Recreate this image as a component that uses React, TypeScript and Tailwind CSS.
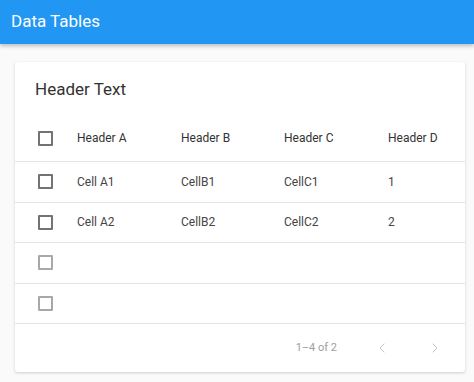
import { ChevronLeft, ChevronRight } from 'lucide-react'

const rows = [
  { a: 'Cell A1', b: 'CellB1', c: 'CellC1', d: '1' },
  { a: 'Cell A2', b: 'CellB2', c: 'CellC2', d: '2' },
  null,
  null,
]

function Checkbox({ muted }: { muted?: boolean }) {
  return (
    <span
      className={`block h-[15px] w-[15px] shrink-0 rounded-[1px] border-2 ${
        muted ? 'border-[#a8a8a8]' : 'border-[#737373]'
      }`}
    />
  )
}

export default function App() {
  return (
    <div className="min-h-[382px] bg-[#fafafa] font-['Roboto',sans-serif]">
      <header className="flex h-[44px] items-center bg-[#2196f3] px-[11px] shadow-[0_2px_4px_rgba(0,0,0,0.25)]">
        <h1 className="text-[17px] text-white">Data Tables</h1>
      </header>

      <div className="pl-[15px] pt-[18px]">
        <section className="w-[450px] rounded-[3px] bg-white shadow-[0_1px_3px_rgba(0,0,0,0.18)]">
          <div className="flex h-[53px] items-center px-[20px] pt-[2px]">
            <h2 className="text-[17px] text-[#333]">Header Text</h2>
          </div>

          <div className="flex h-[47px] items-center border-b border-[#e4e4e4] pl-[23px] text-[12px] text-[#333]">
            <Checkbox />
            <div className="ml-[24px] flex flex-1">
              <span className="w-[104px]">Header A</span>
              <span className="w-[103px]">Header B</span>
              <span className="w-[104px]">Header C</span>
              <span>Header D</span>
            </div>
          </div>

          {rows.map((r, i) => (
            <div
              key={i}
              className="flex h-[40.5px] items-center border-b border-[#e4e4e4] pl-[23px] text-[12px] text-[#444]"
            >
              <Checkbox muted={!r} />
              {r && (
                <div className="ml-[24px] flex flex-1">
                  <span className="w-[104px]">{r.a}</span>
                  <span className="w-[103px]">{r.b}</span>
                  <span className="w-[104px]">{r.c}</span>
                  <span>{r.d}</span>
                </div>
              )}
            </div>
          ))}

          <div className="flex h-[48px] items-center justify-end pr-[22px] text-[#9e9e9e]">
            <span className="text-[11px]">1–4 of 2</span>
            <ChevronLeft className="ml-[37px] h-[16px] w-[16px] text-[#c4c4c4]" strokeWidth={1.5} />
            <ChevronRight className="ml-[37px] h-[16px] w-[16px] text-[#c4c4c4]" strokeWidth={1.5} />
          </div>
        </section>
      </div>
    </div>
  )
}
